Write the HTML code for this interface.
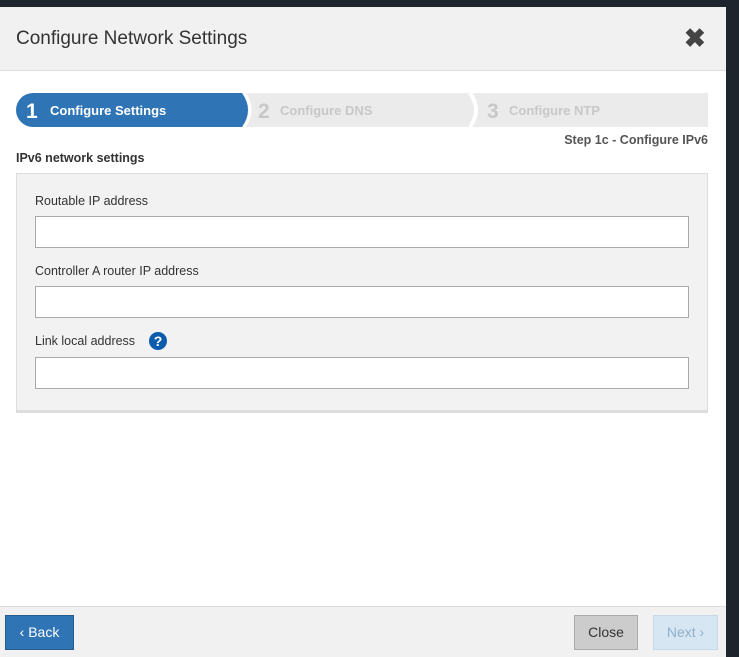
<!DOCTYPE html>
<html><head><style>
*{box-sizing:border-box;margin:0;padding:0}
body{width:739px;height:657px;overflow:hidden;background:#1e252c;font-family:"Liberation Sans",sans-serif;position:relative}
.modal{position:absolute;left:0;top:7px;width:726px;height:650px;background:#fff}
.hdr{position:absolute;left:0;top:0;width:726px;height:64px;background:#f1f1f1;border-bottom:1px solid #ddd}
.hdr h1{position:absolute;left:16px;top:21px;font-size:19px;font-weight:normal;color:#333}
.x{position:absolute;left:684px;top:17px;font-size:26px;font-weight:bold;color:#444;line-height:28px}
.lbl{position:absolute;font-size:12.5px;color:#333}
.panel{position:absolute;left:16px;top:166px;width:692px;height:240px;background:#f2f2f2;border:1px solid #ddd;border-bottom:3px solid #ddd}
.inp{position:absolute;left:18px;width:654px;height:32px;background:#fff;border:1px solid #aaa}
.ftr{position:absolute;left:0;top:599px;width:726px;height:51px;background:#f1f1f1;border-top:1px solid #ddd}
.btn{position:absolute;top:8px;height:35px;font-size:14px;line-height:33px;text-align:center}
</style></head><body>
<div class="modal">
<div class="hdr"><h1>Configure Network Settings</h1><div class="x">✖</div></div>
<svg style="position:absolute;left:0;top:86px" width="726" height="34">
<path d="M472 0 H708 V34 H472 Q482 17 472 0Z" fill="#ebebeb"/>
<path d="M242 0 H478 Q490 17 478 34 H242 Q252 17 242 0Z" fill="#ebebeb"/>
<path d="M470 0 Q482 17 470 34" stroke="#fff" stroke-width="4" fill="none"/>
<path d="M33 0 H242 Q254 17 242 34 H33 A17 17 0 0 1 33 0Z" fill="#2f74b5"/>
<path d="M244 0 Q256 17 244 34" stroke="#fff" stroke-width="3" fill="none"/>
<text x="26" y="25" font-size="21" font-weight="bold" fill="#fff" font-family="Liberation Sans Narrow, Liberation Sans">1</text>
<text x="50" y="22" font-size="13" font-weight="bold" fill="#fff" font-family="Liberation Sans Narrow, Liberation Sans">Configure Settings</text>
<text x="258" y="25" font-size="21" font-weight="bold" fill="#c8c8c8" font-family="Liberation Sans Narrow, Liberation Sans">2</text>
<text x="280" y="22" font-size="13" font-weight="bold" fill="#c8c8c8" font-family="Liberation Sans Narrow, Liberation Sans">Configure DNS</text>
<text x="487" y="25" font-size="21" font-weight="bold" fill="#c8c8c8" font-family="Liberation Sans Narrow, Liberation Sans">3</text>
<text x="509" y="22" font-size="13" font-weight="bold" fill="#c8c8c8" font-family="Liberation Sans Narrow, Liberation Sans">Configure NTP</text>
</svg>
<div class="lbl" style="right:18px;top:126px;font-weight:bold;color:#555">Step 1c - Configure IPv6</div>
<div class="lbl" style="left:16px;top:144px;font-weight:bold">IPv6 network settings</div>
<div class="panel">
<div class="lbl" style="left:18px;top:20px">Routable IP address</div>
<div class="inp" style="top:42px"></div>
<div class="lbl" style="left:18px;top:90px">Controller A router IP address</div>
<div class="inp" style="top:112px"></div>
<div class="lbl" style="left:18px;top:160px">Link local address</div>
<div style="position:absolute;left:132px;top:158px;width:18px;height:18px;border-radius:50%;background:#0b5cad;color:#fff;font-weight:bold;font-size:14px;text-align:center;line-height:18px">?</div>
<div class="inp" style="top:183px"></div>
</div>
<div class="ftr">
<div class="btn" style="left:5px;width:69px;background:#2f74b5;color:#fff;border:1px solid #245a8d">‹ Back</div>
<div class="btn" style="left:574px;width:64px;background:#ccc;color:#333;border:1px solid #aaa">Close</div>
<div class="btn" style="left:653px;width:65px;background:#d6e6f3;color:#8fb0cc;border:1px solid #c8d8e6">Next ›</div>
</div>
</div>
</body></html>
